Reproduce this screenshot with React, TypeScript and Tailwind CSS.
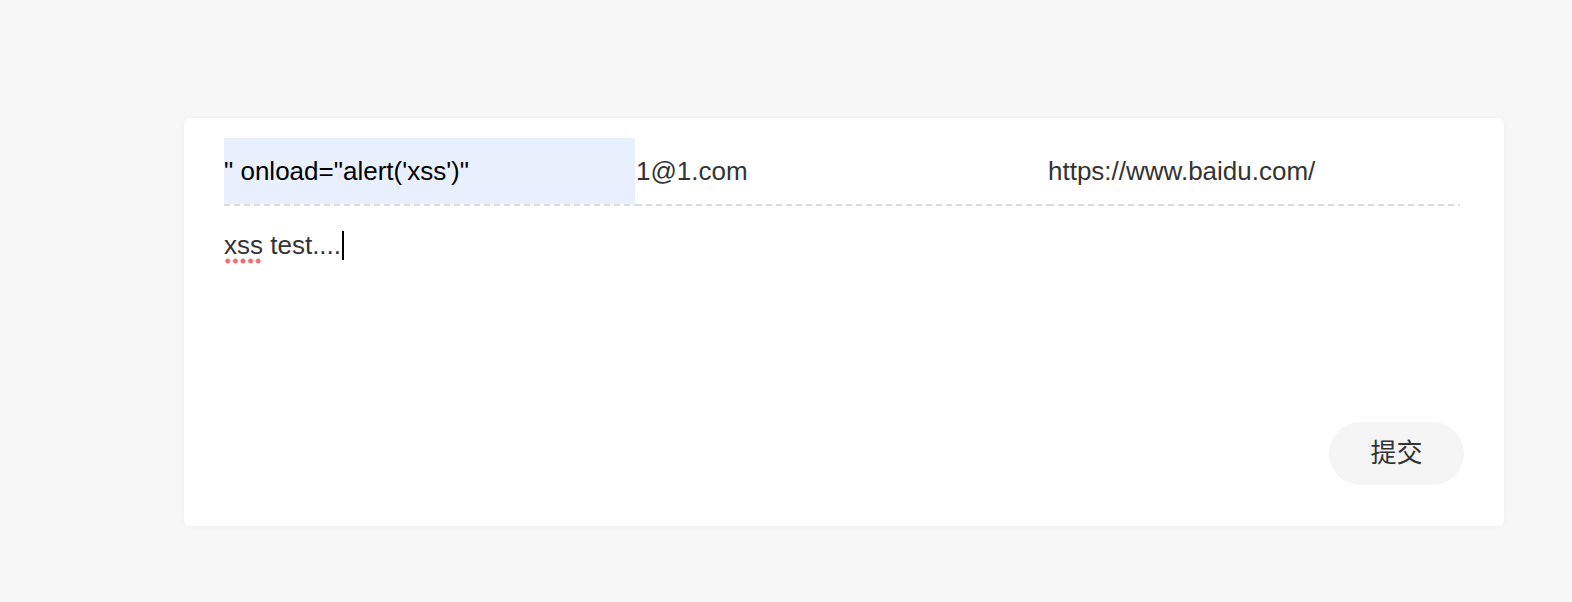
export default function App() {
  const fields = [
    { value: `" onload="alert('xss')"`, filled: true },
    { value: '1@1.com', filled: false },
    { value: 'https://www.baidu.com/', filled: false },
  ];

  return (
    <div className="min-h-[602px] w-full bg-[#f7f7f7] pt-[118px] pl-[184px] font-['Liberation_Sans','Noto_Sans_CJK_SC',sans-serif]">
      <div className="flex w-[1320px] flex-col rounded-md bg-white pt-[20px] pr-[40px] pb-[41px] pl-[40px] shadow-[0_0_6px_rgba(0,0,0,0.04)]">
        <div className="grid w-[1236px] grid-cols-3">
          {fields.map((f) => (
            <div key={f.value} className="flex flex-col">
              <div
                className={`flex h-[66px] w-[411px] items-center pt-[1px] text-[26px] ${
                  f.filled ? 'bg-[#e8f0fe] text-black' : 'text-[#333]'
                }`}
              >
                {f.value}
              </div>
              <div className="h-[2px] bg-[repeating-linear-gradient(90deg,#dcdcdc_0_6px,transparent_6px_10px)]" />
            </div>
          ))}
        </div>
        <div className="flex h-[216px] items-start pt-[23px] text-[26px] leading-[32px] text-[#333]">
          <span className="relative">
            xss
            <span className="absolute left-0 right-0 -bottom-[3px] h-[6px] bg-[radial-gradient(circle,#f07070_2.2px,transparent_2.8px)] bg-[length:7.6px_6px] bg-repeat-x" />
          </span>
          <span>&nbsp;test....</span>
          <span className="ml-[1px] mt-[2px] h-[29px] w-[2px] bg-black" />
        </div>
        <div className="flex justify-end">
          <button
            type="button"
            className="flex h-[63px] w-[135px] items-center justify-center rounded-full bg-[#f5f5f5] text-[26px] text-[#333]"
          >
            提交
          </button>
        </div>
      </div>
    </div>
  );
}
